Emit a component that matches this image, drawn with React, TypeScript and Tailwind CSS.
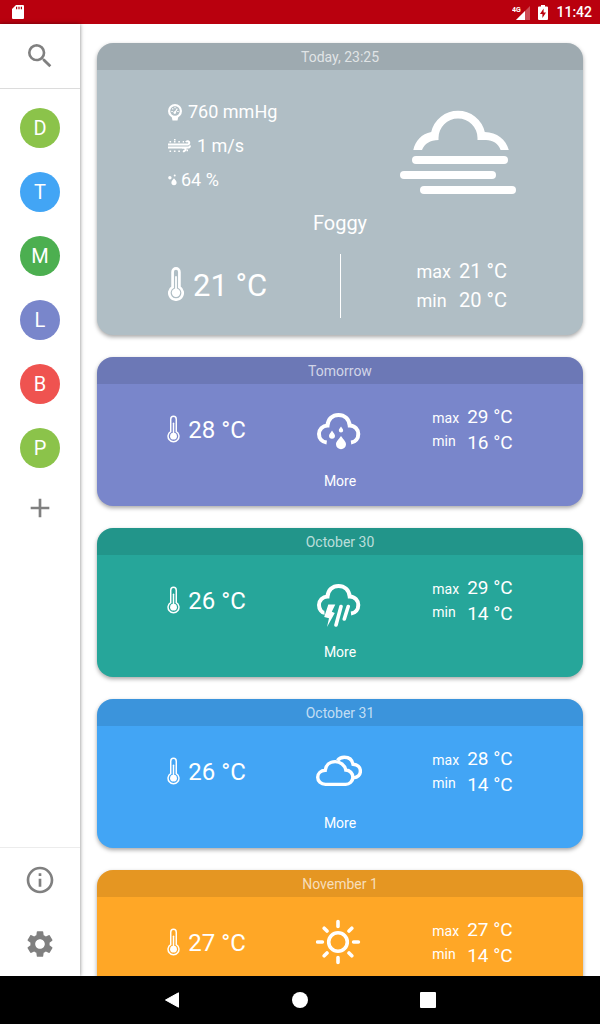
import React from 'react';
import { MdAdd, MdOutlineInfo, MdSearch, MdSettings } from 'react-icons/md';

const locations = [
  { letter: 'D', color: 'bg-[#8bc34a]' },
  { letter: 'T', color: 'bg-[#42a5f5]' },
  { letter: 'M', color: 'bg-[#4caf50]' },
  { letter: 'L', color: 'bg-[#7986cb]' },
  { letter: 'B', color: 'bg-[#ef5350]' },
  { letter: 'P', color: 'bg-[#8bc34a]' },
];

const CLOUD = 'C6 36 3 32.5 3 28C3 23.3 6.5 19.7 11.5 19.5C12 13 16.5 8.9 22.5 8.9C28.5 8.9 33 13 33.7 19.5C39 19.7 42.3 23.5 42.3 28C42.3 32.5 39.5 36 35 36.6';

const RainIcon = () => (
  <svg viewBox="0 -2 46 52" className="h-[52px] w-[46px]" fill="currentColor">
    <path d={`M10.7 36.6${CLOUD}`} fill="none" stroke="currentColor" strokeWidth="4" />
    <path d="M16 24.5C17.5 27 19 28.3 19 29.8A3 3 0 0 1 13 29.8C13 28.3 14.5 27 16 24.5Z" />
    <path d="M25 20.5C26.2 22.3 27.2 23.2 27.2 24.3A2.2 2.2 0 0 1 22.8 24.3C22.8 23.2 23.8 22.3 25 20.5Z" />
    <path d="M25 30C27.5 33.8 30 35.6 30 38.2A5 5 0 0 1 20 38.2C20 35.6 22.5 33.8 25 30Z" />
  </svg>
);

const StormIcon = () => (
  <svg viewBox="0 -2 46 52" className="h-[52px] w-[46px]" fill="currentColor">
    <path d={`M8.5 35.8${CLOUD}`} fill="none" stroke="currentColor" strokeWidth="4" />
    <path d="M12.3 27.6H19.3L15.8 34.8L18.8 36L11 50L13 41.2L8.2 40Z" />
    <path d="M25 29.5L20 48M32.2 29.5L28.3 42" fill="none" stroke="currentColor" strokeWidth="3.6" strokeLinecap="round" />
  </svg>
);

const CloudsIcon = () => (
  <svg viewBox="0 -2 46 52" className="h-[52px] w-[46px]" fill="none" stroke="currentColor" strokeWidth="3.4">
    <path d="M9.5 36.4H29.5A7.2 7.2 0 0 0 29.8 22C28.7 16.6 24 13.6 19.2 13.6C13.5 13.6 9.8 17.4 9.2 22.3C4.8 22.5 1.7 25.3 1.7 29.3C1.7 33.3 5 36.4 9.5 36.4Z" />
    <path d="M21.5 12.5C23 10.3 25.5 9.2 28.3 9.2C33 9.2 36.2 12 37 16.2C41.5 16.6 44.4 19.3 44.4 23C44.4 26.5 41.8 29.2 37.5 29.9" />
  </svg>
);

const SunIcon = () => (
  <svg viewBox="0 -2 46 52" className="h-[52px] w-[46px]" fill="none" stroke="currentColor" strokeWidth="3.6" strokeLinecap="round">
    <circle cx="22" cy="23" r="9.3" />
    <path d="M22 2.6V7.4M22 38.6V43.4M1.6 23H6.4M37.6 23H42.4M8.2 9.2L11 12M33 34L35.8 36.8M8.2 36.8L11 34M33 12L35.8 9.2" />
  </svg>
);

const FogIcon = () => (
  <svg viewBox="0 0 116 84" className="mb-[3px] h-[84px] w-[116px]" fill="currentColor">
    <path d="M13.3 40C15.5 30.5 21.5 24 31.2 22A27.5 27.5 0 0 1 84.8 22C97 22.3 106 29.5 108.8 40H100.6C98.5 33.5 92.5 30 86 30H77.5V28A19.5 19.5 0 0 0 38.5 28V30C30 30.3 24.5 33.5 22 40Z" />
    <rect x="12" y="46" width="96" height="8" rx="4" />
    <rect x="0" y="61" width="96" height="8" rx="4" />
    <rect x="20" y="76" width="96" height="8" rx="4" />
  </svg>
);

const Thermometer = ({ className, stroke }: { className: string; stroke: number }) => (
  <svg viewBox="0 0 16 34" className={className} fill="none" stroke="currentColor">
    <path strokeWidth={stroke} d="M4.6 20.2V5A3.4 3.6 0 0 1 11.4 5V20.2A6.7 6.7 0 1 1 4.6 20.2Z" />
    <path strokeWidth="1.8" strokeLinecap="round" d="M8 10V24" />
    <circle cx="8" cy="25.8" r="4.2" fill="currentColor" stroke="none" />
  </svg>
);

const PressureIcon = () => (
  <svg viewBox="0 0 14 17" className="h-[17px] w-[14px]" fill="none" stroke="currentColor">
    <circle cx="7" cy="7" r="5.9" strokeWidth="2.2" />
    <path strokeWidth="1.2" d="M6.6 9L9.3 4.6M3.3 7.5H4.8M4.3 4.3L5.3 5.3M7 3V4.3M9.2 7.5H10.7" />
    <circle cx="6.8" cy="8.6" r="1.3" fill="currentColor" stroke="none" />
    <path d="M3.5 12H10.5L9.5 16.5H4.5Z" fill="currentColor" stroke="none" />
  </svg>
);

const WindIcon = () => (
  <svg viewBox="0 0 23 14" className="h-[14px] w-[23px]" fill="none" stroke="currentColor">
    <path strokeWidth="2" d="M0 5.6H19.5A1.7 1.7 0 1 0 18 3.2M0 8.6H20A2 2 0 0 0 22 6.5M14 8.8H16.5A1.7 1.7 0 1 1 15 12" />
    <path strokeWidth="1.6" strokeDasharray="1.6 2.8" d="M1.5 2.8H16M1.5 12.2H12M6 .8H8M18.5 11.4H20" />
  </svg>
);

const HumidityIcon = () => (
  <svg viewBox="0 0 9 12" className="h-3 w-[9px]" fill="currentColor">
    <circle cx="1.9" cy="3.8" r="1.7" />
    <circle cx="6.7" cy="1.6" r="1" />
    <path d="M6 4.2C7.4 6.2 8.6 7 8.6 8.6A2.6 2.6 0 0 1 3.4 8.6C3.4 7 4.6 6.2 6 4.2Z" />
  </svg>
);

const days = [
  { title: 'Tomorrow', temp: 28, max: 29, min: 16, color: 'bg-[#7986cb]', icon: <RainIcon /> },
  { title: 'October 30', temp: 26, max: 29, min: 14, color: 'bg-[#26a69a]', icon: <StormIcon /> },
  { title: 'October 31', temp: 26, max: 28, min: 14, color: 'bg-[#42a5f5]', icon: <CloudsIcon /> },
  { title: 'November 1', temp: 27, max: 27, min: 14, color: 'bg-[#ffa726]', icon: <SunIcon /> },
];

const CardTitle = ({ children }: { children: React.ReactNode }) => (
  <h2 className="h-[27px] bg-black/10 pt-1 text-center text-sm text-white/70">{children}</h2>
);

const StatusBar = () => (
  <header className="flex h-6 shrink-0 items-center justify-between bg-[#b9000e] pr-2 pl-3 text-white">
    <svg viewBox="0 0 12 14" className="h-[14px] w-3" fill="currentColor">
      <path fillRule="evenodd" d="M4 0H11Q12 0 12 1V13Q12 14 11 14H1Q0 14 0 13V4ZM4 1.8V4.2H5.2V1.8ZM6.4 1.8V4.2H7.6V1.8ZM8.8 1.8V4.2H10V1.8Z" />
    </svg>
    <div className="flex items-center">
      <svg viewBox="0 0 18 15" className="h-[15px] w-[18px]" fill="currentColor">
        <path d="M18 1V15H4Z" opacity=".3" />
        <path d="M13 6V15H4Z" />
        <text x="0" y="7" fontSize="7" fontWeight="700" fontFamily="Roboto">4G</text>
      </svg>
      <svg viewBox="0 0 10 15" className="ml-2 h-[15px] w-[10px]" fill="currentColor">
        <path fillRule="evenodd" d="M3 0H7V1.5H9Q10 1.5 10 2.5V14Q10 15 9 15H1Q0 15 0 14V2.5Q0 1.5 1 1.5H3ZM5.6 3.5L2 9H4.4V13L8 7.5H5.6Z" />
      </svg>
      <span className="ml-2 text-sm leading-6 font-medium">11:42</span>
    </div>
  </header>
);

const Sidebar = () => (
  <aside className="z-10 flex w-20 shrink-0 flex-col bg-white text-[#808080] shadow-[0_0_4px_rgba(0,0,0,0.5)]">
    <button aria-label="Search" className="flex h-[65px] items-center justify-center border-b border-[#dcdcdc]">
      <MdSearch className="size-8" />
    </button>
    <nav className="flex flex-1 flex-col items-center gap-6 pt-[19px]">
      {locations.map((location, index) => (
        <button key={index} className={`${location.color} size-10 rounded-full text-xl text-white`}>
          {location.letter}
        </button>
      ))}
      <button aria-label="Add location">
        <MdAdd className="size-8" />
      </button>
    </nav>
    <div className="flex flex-col border-t border-[#ececec]">
      <button aria-label="About" className="flex h-16 items-center justify-center">
        <MdOutlineInfo className="size-8" />
      </button>
      <button aria-label="Settings" className="flex h-16 items-center justify-center">
        <MdSettings className="size-8" />
      </button>
    </div>
  </aside>
);

const TodayCard = () => (
  <section className="overflow-hidden rounded-2xl bg-[#b0bec5] text-white shadow-[0_2px_4px_rgba(0,0,0,0.35)]">
    <CardTitle>Today, 23:25</CardTitle>
    <div className="flex items-end justify-between pt-[25px] pr-[67px] pl-[71px]">
      <ul className="text-lg leading-[34px]">
        <li className="flex items-center gap-[6px]"><PressureIcon />760 mmHg</li>
        <li className="flex items-center gap-[6px]"><WindIcon />1 m/s</li>
        <li className="flex items-center gap-1"><HumidityIcon />64 %</li>
      </ul>
      <FogIcon />
    </div>
    <p className="mt-3 text-center text-xl">Foggy</p>
    <div className="mt-[17px] grid grid-cols-[1fr_1px_1fr] items-center pb-[17px]">
      <div className="flex items-center gap-[9px] pl-[71px] text-[31px]">
        <Thermometer className="mb-1 h-[34px] w-4" stroke={2.7} />
        <p>21 °C</p>
      </div>
      <div className="h-16 bg-white" />
      <div className="flex justify-center gap-2 leading-[29px]">
        <div className="text-lg leading-[29px]">
          <p>max</p>
          <p>min</p>
        </div>
        <div className="text-xl leading-[29px]">
          <p>21 °C</p>
          <p>20 °C</p>
        </div>
      </div>
    </div>
  </section>
);

const App = () => {
  return (
    <div className="flex h-screen flex-col bg-white font-[Roboto,sans-serif]">
      <StatusBar />
      <div className="flex min-h-0 flex-1">
        <Sidebar />
        <main className="flex flex-1 flex-col gap-[22px] overflow-y-auto px-[17px] pt-[19px] [scrollbar-width:none] *:shrink-0">
          <TodayCard />
          {days.map((day) => (
            <section
              key={day.title}
              className={`${day.color} overflow-hidden rounded-2xl pb-[15px] text-white shadow-[0_2px_4px_rgba(0,0,0,0.35)]`}
            >
              <CardTitle>{day.title}</CardTitle>
              <div className="flex items-center justify-evenly pt-5">
                <div className="flex items-center gap-2 text-2xl">
                  <Thermometer className="mb-0.5 h-7 w-[13px]" stroke={1.8} />
                  <p>{day.temp} °C</p>
                </div>
                {day.icon}
                <div className="flex items-center gap-2">
                  <div className="text-sm leading-[23px]">
                    <p>max</p>
                    <p>min</p>
                  </div>
                  <div className="text-[19px] leading-[26px]">
                    <p>{day.max} °C</p>
                    <p>{day.min} °C</p>
                  </div>
                </div>
              </div>
              <button className="mx-auto mt-[15px] block text-sm">More</button>
            </section>
          ))}
        </main>
      </div>
      <footer className="flex h-12 shrink-0 justify-center bg-black text-white">
        <button aria-label="Back" className="flex w-32 items-center justify-center">
          <svg viewBox="0 0 16 16" className="size-4" fill="currentColor" stroke="currentColor" strokeLinejoin="round">
            <path d="M1.5 8L14.5 .8V15.2Z" />
          </svg>
        </button>
        <button aria-label="Home" className="flex w-32 items-center justify-center">
          <span className="size-4 rounded-full bg-white" />
        </button>
        <button aria-label="Recent apps" className="flex w-32 items-center justify-center">
          <span className="size-4 rounded-[1px] bg-white" />
        </button>
      </footer>
    </div>
  );
};

export default App;
